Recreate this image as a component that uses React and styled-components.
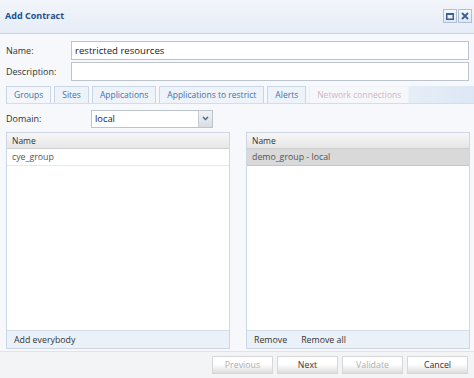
import React from "react";
import styled, { createGlobalStyle } from "styled-components";

const Global = createGlobalStyle`
  html, body { margin: 0; padding: 0; background: #fff; }
  body { font-family: "Open Sans", "Noto Sans", sans-serif; font-size: 8.5px; }
`;

const Window = styled.div`
  width: 474px;
  height: 378px;
  display: flex;
  flex-direction: column;
  background: #f6f8fb;
  box-sizing: border-box;
  overflow: hidden;
`;

const TitleBar = styled.div`
  height: 34px;
  flex: none;
  display: flex;
  align-items: center;
  justify-content: space-between;
  padding: 0 2px 2px 5px;
  box-sizing: border-box;
  background: linear-gradient(#f2f5fa, #e6edf7);
  border-bottom: 1px solid #c6d3e5;
`;

const Title = styled.div`
  font-weight: 700;
  font-size: 9px;
  color: #22508f;
`;

const WinButtons = styled.div`
  display: flex;
  gap: 1px;
  margin-top: 1px;
`;

const WinButton = styled.div`
  width: 12px;
  height: 12px;
  border: 1px solid #aebfd6;
  background: linear-gradient(#f5f8fc, #dfe7f2);
  display: flex;
  align-items: center;
  justify-content: center;
`;

const Body = styled.div`
  flex: 1;
  display: flex;
  flex-direction: column;
  padding: 7px 5px 0 6px;
  min-height: 0;
`;

const FormRow = styled.div`
  display: flex;
  align-items: center;
  height: 19px;
  margin-bottom: 2px;
`;

const Label = styled.div`
  width: ${(p) => p.w || 65}px;
  flex: none;
  color: #333;
  font-size: 9px;
`;

const TextInput = styled.div`
  flex: 1;
  height: 19px;
  box-sizing: border-box;
  border: 1px solid #bcc4ce;
  background: #fff;
  padding: 0 3px;
  display: flex;
  align-items: center;
  color: #222;
  font-size: 9.6px;
`;

const TabStrip = styled.div`
  display: flex;
  gap: 3px;
  margin: 3px -5px 0 0;
  padding-right: 5px;
  height: 17px;
  align-items: stretch;
  border-bottom: 1px solid #d3deec;
  background: linear-gradient(90deg, rgba(255,255,255,0) 60%, #dde8f5);
`;

const Tab = styled.div`
  padding: 0 ${(p) => p.px || 7}px;
  display: flex;
  align-items: center;
  border: 1px solid ${(p) => (p.disabled ? "#eef2f7" : "#c9d6e8")};
  border-bottom: none;
  background: ${(p) => (p.active ? "#f3f7fc" : p.disabled ? "#f5f7fa" : "#eef3fa")};
  color: ${(p) => (p.disabled ? "#d4b6bd" : "#4472aa")};
  font-size: 8.5px;
`;

const DomainRow = styled.div`
  display: flex;
  align-items: center;
  height: 18px;
  margin-top: 6px;
`;

const Select = styled.div`
  width: 122px;
  height: 18px;
  box-sizing: border-box;
  border: 1px solid #bcc4ce;
  background: #fff;
  display: flex;
  align-items: center;
  font-size: 9.3px;
  color: #222;
`;

const SelectText = styled.div`
  flex: 1;
  padding-left: 3px;
`;

const SelectBtn = styled.div`
  width: 13px;
  height: 100%;
  border-left: 1px solid #c5ccd6;
  background: linear-gradient(#f1f3f6, #d9dde3);
  display: flex;
  align-items: center;
  justify-content: center;
`;

const Panels = styled.div`
  display: flex;
  gap: 16px;
  margin-top: 4px;
  height: 220px;
`;

const Panel = styled.div`
  flex: none;
  width: 224px;
  display: flex;
  flex-direction: column;
  border: 1px solid #cdd6e2;
  background: #fff;
  box-sizing: border-box;
`;

const PanelHeader = styled.div`
  height: 15px;
  flex: none;
  display: flex;
  align-items: center;
  padding-left: 5px;
  background: linear-gradient(#f7f7f7, #e6e6e6);
  border-bottom: 1px solid #d0d0d0;
  color: #333;
  font-size: 8.5px;
`;

const ListRow = styled.div`
  height: 16px;
  flex: none;
  display: flex;
  align-items: center;
  padding-left: 5px;
  border-bottom: 1px solid ${(p) => (p.selected ? "#c6c6c6" : "#e8e8e8")};
  background: ${(p) => (p.selected ? "#d9d9d9" : "#fff")};
  color: #555;
  font-size: 8.8px;
`;

const Spacer = styled.div`
  flex: 1;
`;

const PanelFooter = styled.div`
  height: 17px;
  flex: none;
  display: flex;
  align-items: center;
  gap: 14px;
  padding-left: 7px;
  background: #ebf1f9;
  border-top: 1px solid #d4deeb;
  color: #333;
  font-size: 8.8px;
`;

const ButtonBar = styled.div`
  height: 26px;
  flex: none;
  margin-top: 2px;
  display: flex;
  align-items: center;
  justify-content: flex-end;
  gap: 4px;
  padding-right: 6px;
  background: #f3f4f6;
  border-top: 1px solid #dfe4ea;
`;

const Button = styled.div`
  width: 61px;
  height: 18px;
  box-sizing: border-box;
  border: 1px solid #d7d7d7;
  background: linear-gradient(#ffffff 45%, #dedede);
  display: flex;
  align-items: center;
  justify-content: center;
  color: ${(p) => (p.disabled ? "#b0b0b0" : "#333")};
  font-size: 8.8px;
`;

export default function App() {
  return (
    <>
      <Global />
      <Window>
        <TitleBar>
          <Title>Add Contract</Title>
          <WinButtons>
            <WinButton>
              <svg width="8" height="7" viewBox="0 0 8 7">
                <rect x="0.75" y="0.75" width="6.5" height="5.5" fill="none" stroke="#3a5f92" strokeWidth="1.5" />
                <rect x="0" y="0" width="8" height="2" fill="#3a5f92" />
              </svg>
            </WinButton>
            <WinButton>
              <svg width="8" height="8" viewBox="0 0 8 8">
                <path d="M1 1 L7 7 M7 1 L1 7" stroke="#3a5f92" strokeWidth="1.8" />
              </svg>
            </WinButton>
          </WinButtons>
        </TitleBar>
        <Body>
          <FormRow>
            <Label>Name:</Label>
            <TextInput>restricted resources</TextInput>
          </FormRow>
          <FormRow>
            <Label>Description:</Label>
            <TextInput />
          </FormRow>
          <TabStrip>
            <Tab active>Groups</Tab>
            <Tab>Sites</Tab>
            <Tab>Applications</Tab>
            <Tab>Applications to restrict</Tab>
            <Tab>Alerts</Tab>
            <Tab disabled>Network connections</Tab>
          </TabStrip>
          <DomainRow>
            <Label w={85}>Domain:</Label>
            <Select>
              <SelectText>local</SelectText>
              <SelectBtn>
                <svg width="7" height="5" viewBox="0 0 7 5">
                  <path d="M1 1 L3.5 3.5 L6 1" fill="none" stroke="#4a6a96" strokeWidth="1.5" />
                </svg>
              </SelectBtn>
            </Select>
          </DomainRow>
          <Panels>
            <Panel>
              <PanelHeader>Name</PanelHeader>
              <ListRow>cye_group</ListRow>
              <Spacer />
              <PanelFooter>Add everybody</PanelFooter>
            </Panel>
            <Panel>
              <PanelHeader>Name</PanelHeader>
              <ListRow selected>demo_group - local</ListRow>
              <Spacer />
              <PanelFooter>
                <span>Remove</span>
                <span>Remove all</span>
              </PanelFooter>
            </Panel>
          </Panels>
        </Body>
        <ButtonBar>
          <Button disabled>Previous</Button>
          <Button>Next</Button>
          <Button disabled>Validate</Button>
          <Button>Cancel</Button>
        </ButtonBar>
      </Window>
    </>
  );
}
